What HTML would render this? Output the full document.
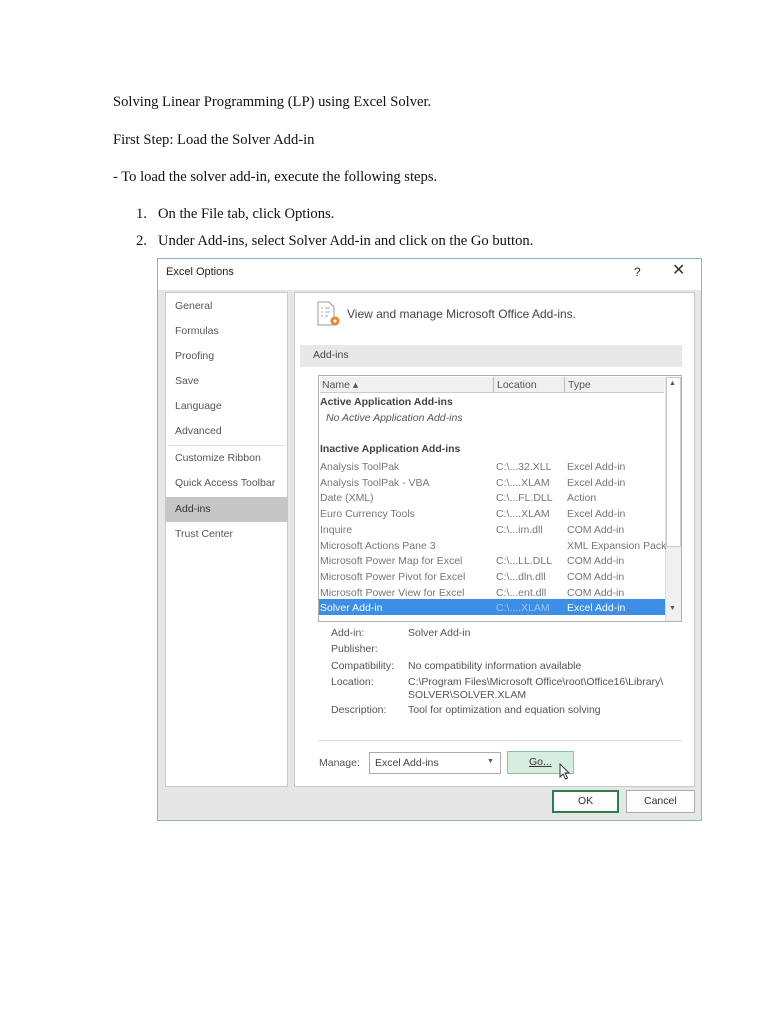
<!DOCTYPE html>
<html><head><meta charset="utf-8"><style>
*{margin:0;padding:0;box-sizing:border-box}
body{width:768px;height:1024px;background:#fff;position:relative;overflow:hidden;font-family:"Liberation Serif",serif;color:#111}
.t{position:absolute;font-size:14.6px;white-space:nowrap;line-height:1}
.d{position:absolute;font-family:"Liberation Sans",sans-serif;font-size:10.5px;color:#555;white-space:nowrap;line-height:1}
.b{position:absolute}
</style></head><body>
<div class="t" style="left:113px;top:95px">Solving Linear Programming (LP) using Excel Solver.</div>
<div class="t" style="left:113px;top:133px">First Step: Load the Solver Add-in</div>
<div class="t" style="left:113px;top:170px">- To load the solver add-in, execute the following steps.</div>
<div class="t" style="left:136px;top:207px">1.</div><div class="t" style="left:158px;top:207px">On the File tab, click Options.</div>
<div class="t" style="left:136px;top:234px">2.</div><div class="t" style="left:158px;top:234px">Under Add-ins, select Solver Add-in and click on the Go button.</div>

<div class="b" style="left:157px;top:258px;width:545px;height:563px;border:1px solid #8fb0d4;background:#e6e6e6"></div>
<div class="b" style="left:158px;top:259px;width:543px;height:31px;background:#fff"></div>
<div class="d" style="left:166px;top:267px;color:#222;font-size:11px">Excel Options</div>
<div class="d" style="left:634px;top:266px;color:#333;font-size:12px">?</div>
<div class="d" style="left:672px;top:263px;color:#333;font-size:16px">✕</div>
<div class="b" style="left:165px;top:292px;width:123px;height:495px;background:#fff;border:1px solid #c8c8c8"></div>
<div class="d" style="left:175px;top:301px">General</div>
<div class="d" style="left:175px;top:326px">Formulas</div>
<div class="d" style="left:175px;top:351px">Proofing</div>
<div class="d" style="left:175px;top:376px">Save</div>
<div class="d" style="left:175px;top:401px">Language</div>
<div class="d" style="left:175px;top:426px">Advanced</div>
<div class="b" style="left:168px;top:445px;width:117px;height:1px;background:#e0e0e0"></div>
<div class="d" style="left:175px;top:453px">Customize Ribbon</div>
<div class="d" style="left:175px;top:478px">Quick Access Toolbar</div>
<div class="b" style="left:166px;top:497px;width:121px;height:25px;background:#c6c6c6"></div>
<div class="d" style="left:175px;top:504px;color:#333">Add-ins</div>
<div class="d" style="left:175px;top:529px">Trust Center</div>
<div class="b" style="left:294px;top:292px;width:401px;height:495px;background:#fff;border:1px solid #c8c8c8"></div>
<svg class="b" style="left:316px;top:300px" width="28" height="28" viewBox="0 0 28 28"><path d="M2 2h11l5 5v18H2z" fill="#fff" stroke="#999"/><path d="M5 8h2M5 12h2M5 16h2M9 8h5M9 12h5M9 16h3" stroke="#aaa"/><circle cx="19" cy="21" r="4.5" fill="#e8862c"/><circle cx="19" cy="21" r="1.6" fill="#fff"/></svg>
<div class="d" style="left:347px;top:308px;font-size:12px;color:#444">View and manage Microsoft Office Add-ins.</div>
<div class="b" style="left:300px;top:345px;width:382px;height:22px;background:#e8e8e8"></div>
<div class="d" style="left:313px;top:350px;color:#444">Add-ins</div>
<div class="b" style="left:318px;top:375px;width:364px;height:247px;border:1px solid #b0b0b0;background:#fff"></div>
<div class="b" style="left:320px;top:377px;width:344px;height:16px;background:#f0f0f0;border-bottom:1px solid #ccc"></div>
<div class="b" style="left:493px;top:377px;width:1px;height:16px;background:#bbb"></div>
<div class="b" style="left:564px;top:377px;width:1px;height:16px;background:#bbb"></div>
<div class="d" style="left:322px;top:380px">Name ▴</div>
<div class="d" style="left:497px;top:380px">Location</div>
<div class="d" style="left:568px;top:380px">Type</div>
<div class="b" style="left:665px;top:377px;width:16px;height:244px;background:#f0f0f0;border-left:1px solid #ddd"></div>
<div class="b" style="left:666px;top:377px;width:15px;height:170px;background:#fff;border:1px solid #ccc"></div>
<div class="d" style="left:669px;top:380px;font-size:7px">▲</div>
<div class="d" style="left:669px;top:605px;font-size:7px">▼</div>
<div class="d" style="left:320px;top:397px;font-weight:bold;color:#444">Active Application Add-ins</div>
<div class="d" style="left:326px;top:413px;font-style:italic">No Active Application Add-ins</div>
<div class="d" style="left:320px;top:444px;font-weight:bold;color:#444">Inactive Application Add-ins</div>
<div class="b" style="left:319px;top:599px;width:346px;height:16px;background:#3d8ee6"></div>
<div class="d" style="left:320px;top:460px;color:#777;line-height:15.7px">Analysis ToolPak<br>Analysis ToolPak - VBA<br>Date (XML)<br>Euro Currency Tools<br>Inquire<br>Microsoft Actions Pane 3<br>Microsoft Power Map for Excel<br>Microsoft Power Pivot for Excel<br>Microsoft Power View for Excel<br><span style="color:#fff">Solver Add-in</span></div>
<div class="d" style="left:496px;top:460px;color:#777;line-height:15.7px">C:\...32.XLL<br>C:\....XLAM<br>C:\...FL.DLL<br>C:\....XLAM<br>C:\...im.dll<br>&nbsp;<br>C:\...LL.DLL<br>C:\...dln.dll<br>C:\...ent.dll<br><span style="color:#9cc4ee">C:\....XLAM</span></div>
<div class="d" style="left:567px;top:460px;color:#777;line-height:15.7px">Excel Add-in<br>Excel Add-in<br>Action<br>Excel Add-in<br>COM Add-in<br>XML Expansion Pack<br>COM Add-in<br>COM Add-in<br>COM Add-in<br><span style="color:#fff">Excel Add-in</span></div>
<div class="d" style="left:331px;top:625px;line-height:16.4px">Add-in:<br>Publisher:<br>Compatibility:<br>Location:</div>
<div class="d" style="left:331px;top:705px">Description:</div>
<div class="d" style="left:408px;top:625px;line-height:16.4px">Solver Add-in<br>&nbsp;<br>No compatibility information available<br>C:\Program Files\Microsoft Office\root\Office16\Library\</div>
<div class="d" style="left:408px;top:690px">SOLVER\SOLVER.XLAM</div>
<div class="d" style="left:408px;top:705px">Tool for optimization and equation solving</div>
<div class="b" style="left:318px;top:740px;width:364px;height:1px;background:#ddd"></div>
<div class="d" style="left:319px;top:758px">Manage:</div>
<div class="b" style="left:369px;top:752px;width:132px;height:22px;border:1px solid #ababab;background:#fff"></div>
<div class="d" style="left:375px;top:758px;color:#444">Excel Add-ins</div>
<div class="d" style="left:487px;top:758px;font-size:7px">▼</div>
<div class="b" style="left:507px;top:751px;width:67px;height:23px;border:1px solid #86c49f;background:#d5eedf"></div>
<div class="d" style="left:529px;top:757px;color:#333;text-decoration:underline">Go...</div>
<svg class="b" style="left:559px;top:763px" width="12" height="18" viewBox="0 0 12 18"><path d="M1 1v13l3-3 2.5 5 2-1-2.5-5h4z" fill="#fff" stroke="#333"/></svg>
<div class="b" style="left:552px;top:790px;width:67px;height:23px;border:2px solid #2f7d4e;background:#fdfdfd"></div>
<div class="d" style="left:578px;top:796px;color:#333">OK</div>
<div class="b" style="left:626px;top:790px;width:69px;height:23px;border:1px solid #adadad;background:#fdfdfd"></div>
<div class="d" style="left:644px;top:796px;color:#333">Cancel</div>
</body></html>
